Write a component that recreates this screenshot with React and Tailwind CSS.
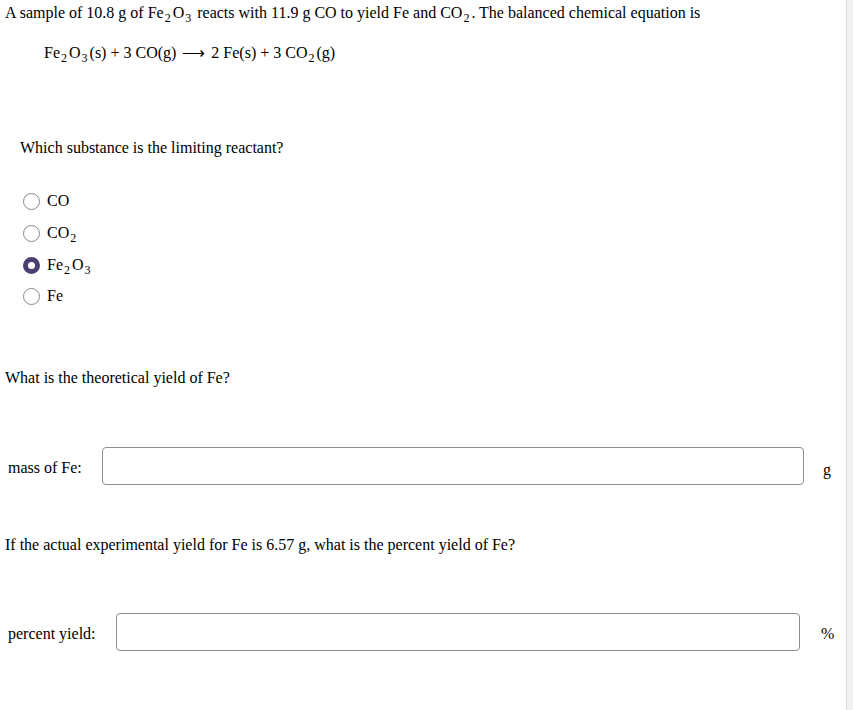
import React from "react";

const Sub = ({ children }) => (
  <sub className="text-[12px] relative -bottom-[4px] leading-none pl-[1px] pr-[2px]">{children}</sub>
);

const Radio = ({ checked }) =>
  checked ? (
    <span className="w-[17px] h-[17px] rounded-full border-[5px] border-[#4b3f72] bg-white flex-shrink-0" />
  ) : (
    <span className="w-[17px] h-[17px] rounded-full border border-[#8a8a8a] bg-white flex-shrink-0" />
  );

const options = [
  { label: <>CO</>, checked: false },
  { label: <>CO<Sub>2</Sub></>, checked: false },
  { label: <>Fe<Sub>2</Sub>O<Sub>3</Sub></>, checked: true },
  { label: <>Fe</>, checked: false },
];

const App = () => {
  return (
    <div
      className="relative w-[853px] h-[710px] bg-white text-black text-[16px] overflow-hidden flex"
      style={{ fontFamily: '"Liberation Serif", "Times New Roman", serif' }}
    >
      <div className="w-[846px] flex flex-col">
        <p className="pl-[5px] pt-[1px] leading-6">
          A sample of 10.8 g of Fe<Sub>2</Sub>O<Sub>3</Sub> reacts with 11.9 g CO to yield Fe and CO<Sub>2</Sub>. The balanced chemical equation is
        </p>

        <p className="pl-[44px] mt-4 leading-6">
          Fe<Sub>2</Sub>O<Sub>3</Sub>(s) + 3 CO(g) <span className="mx-[2px]">⟶</span> 2 Fe(s) + 3 CO<Sub>2</Sub>(g)
        </p>

        <p className="pl-[20px] mt-[71px] leading-6">Which substance is the limiting reactant?</p>

        <div className="mt-[25px] pl-[23px] flex flex-col">
          {options.map((o, i) => (
            <label key={i} className={`flex items-center gap-[7px] ${i === 3 ? "h-[30px]" : "h-8"}`}>
              <Radio checked={o.checked} />
              <span className="leading-6">{o.label}</span>
            </label>
          ))}
        </div>

        <p className="pl-[5px] mt-[55px] leading-6">What is the theoretical yield of Fe?</p>

        <div className="mt-[57px] flex items-center h-[38px]">
          <span className="pl-[8px] w-[102px] pt-[4px]">mass of Fe:</span>
          <div className="w-[702px] h-[38px] border border-[#8f8f8f] rounded-[4px] bg-white" />
          <span className="pl-[19px] pt-[8px]">g</span>
        </div>

        <p className="pl-[5px] mt-[48px] leading-6">
          If the actual experimental yield for Fe is 6.57 g, what is the percent yield of Fe?
        </p>

        <div className="mt-[56px] flex items-center h-[38px]">
          <span className="pl-[8px] w-[116px] pt-[4px]">percent yield:</span>
          <div className="w-[684px] h-[38px] border border-[#8f8f8f] rounded-[4px] bg-white" />
          <span className="pl-[21px] pt-[4px]">%</span>
        </div>
      </div>
      <div className="w-[7px] h-full bg-[#f1f1f1] border-l border-[#dcdcdc]" />
    </div>
  );
};

export default App;
